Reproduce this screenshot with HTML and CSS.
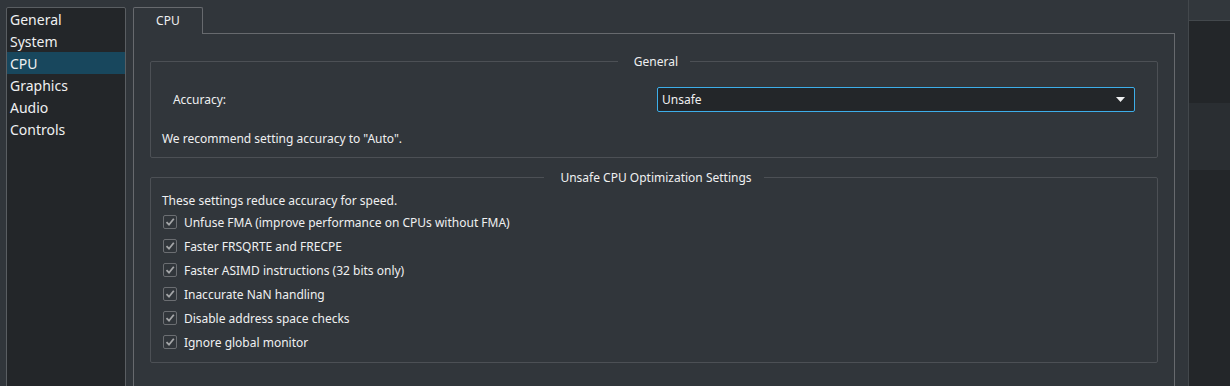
FILE: index.html
```html
<!DOCTYPE html>
<html>
<head>
<meta charset="utf-8">
<link rel="stylesheet" href="styles.css">
</head>
<body>
<div class="app">
  <ul class="sidebar">
    <li>General</li>
    <li>System</li>
    <li class="selected">CPU</li>
    <li>Graphics</li>
    <li>Audio</li>
    <li>Controls</li>
  </ul>
  <div class="main">
    <div class="tabbar">
      <div class="tab">CPU</div>
      <div class="tabfill"></div>
    </div>
    <div class="pane">
      <fieldset class="group">
        <legend>General</legend>
        <div class="acc-row">
          <span class="acc-label">Accuracy:</span>
          <div class="combo">
            <span>Unsafe</span>
            <svg class="arrow" width="9" height="5" viewBox="0 0 9 5"><path d="M0 0H9L4.5 5Z" fill="#eff0f1"/></svg>
          </div>
        </div>
        <p class="note">We recommend setting accuracy to "Auto".</p>
      </fieldset>
      <fieldset class="group unsafe">
        <legend>Unsafe CPU Optimization Settings</legend>
        <p class="intro">These settings reduce accuracy for speed.</p>
        <ul class="checks">
          <li><span class="cb"><svg width="12" height="12" viewBox="0 0 12 12"><path d="M2.5 6.2L5 8.7L9.8 2.8" fill="none" stroke="#a4a6a8" stroke-width="1.8"/></svg></span>Unfuse FMA (improve performance on CPUs without FMA)</li>
          <li><span class="cb"><svg width="12" height="12" viewBox="0 0 12 12"><path d="M2.5 6.2L5 8.7L9.8 2.8" fill="none" stroke="#a4a6a8" stroke-width="1.8"/></svg></span>Faster FRSQRTE and FRECPE</li>
          <li><span class="cb"><svg width="12" height="12" viewBox="0 0 12 12"><path d="M2.5 6.2L5 8.7L9.8 2.8" fill="none" stroke="#a4a6a8" stroke-width="1.8"/></svg></span>Faster ASIMD instructions (32 bits only)</li>
          <li><span class="cb"><svg width="12" height="12" viewBox="0 0 12 12"><path d="M2.5 6.2L5 8.7L9.8 2.8" fill="none" stroke="#a4a6a8" stroke-width="1.8"/></svg></span>Inaccurate NaN handling</li>
          <li><span class="cb"><svg width="12" height="12" viewBox="0 0 12 12"><path d="M2.5 6.2L5 8.7L9.8 2.8" fill="none" stroke="#a4a6a8" stroke-width="1.8"/></svg></span>Disable address space checks</li>
          <li><span class="cb"><svg width="12" height="12" viewBox="0 0 12 12"><path d="M2.5 6.2L5 8.7L9.8 2.8" fill="none" stroke="#a4a6a8" stroke-width="1.8"/></svg></span>Ignore global monitor</li>
        </ul>
      </fieldset>
    </div>
  </div>
  <div class="strip">
    <div class="s1"></div>
    <div class="s2"></div>
    <div class="s3"></div>
    <div class="s4"></div>
  </div>
</div>
</body>
</html>
```

FILE: styles.css
```css
html, body {
  margin: 0;
  padding: 0;
  background: #31363b;
  overflow: hidden;
}
body {
  font-family: "Noto Sans", "DejaVu Sans", sans-serif;
  font-size: 12px;
  color: #eff0f1;
}
.app {
  display: flex;
  height: 420px;
  padding: 7px 0 0 6px;
  box-sizing: border-box;
}
.sidebar {
  list-style: none;
  margin: 0;
  padding: 0;
  width: 118px;
  background: #232629;
  border: 1px solid #5a5e62;
  border-radius: 2px;
  font-size: 14px;
}
.sidebar li {
  height: 22px;
  line-height: 23px;
  padding-left: 3px;
}
.sidebar li.selected {
  background: #18475d;
}
.main {
  margin-left: 7px;
  width: 1043px;
  display: flex;
  flex-direction: column;
}
.tabbar {
  display: flex;
  height: 27px;
}
.tab {
  box-sizing: border-box;
  width: 70px;
  border: 1px solid #676a6e;
  border-bottom: none;
  border-radius: 2px 2px 0 0;
  text-align: center;
  line-height: 26px;
}
.tabfill {
  flex: 1;
  border-bottom: 1px solid #676a6e;
}
.pane {
  flex: 1;
  border: 1px solid #676a6e;
  border-top: none;
  padding: 19px 16px 0 16px;
}
.group {
  margin: 0;
  border: 1px solid #4c5055;
  border-radius: 2px;
  padding: 17px 11px 10px 11px;
}
.group legend {
  margin: 0 auto;
  padding: 0 12px 0 16px;
  line-height: 17px;
}
.acc-row {
  display: flex;
  align-items: center;
  justify-content: space-between;
  padding: 0 11px 0 11px;
}
.combo {
  box-sizing: border-box;
  width: 478px;
  height: 25px;
  border: 1px solid #3daee9;
  border-radius: 2px;
  background: #232629;
  display: flex;
  align-items: center;
  justify-content: space-between;
  padding: 0 9px 0 4px;
}
.note {
  margin: 18px 0 0 0;
  line-height: 17px;
}
.unsafe {
  margin-top: 11px;
  padding-top: 6px;
  padding-bottom: 8px;
}
.intro {
  margin: 0;
  line-height: 18px;
}
.checks {
  list-style: none;
  margin: 0;
  padding: 0;
}
.checks li {
  height: 24px;
  display: flex;
  align-items: center;
}
.cb {
  width: 12px;
  height: 12px;
  border: 1px solid #6b6e72;
  border-radius: 2px;
  background: #31363b;
  margin: 0 7px 0 1px;
  display: flex;
}
.strip {
  margin-left: 13px;
  width: 41px;
  margin-top: -7px;
  border-left: 1px solid #43484c;
  display: flex;
  flex-direction: column;
}
.s1 {
  height: 20px;
  background: #32373c;
  border-bottom: 1px solid #43484c;
}
.s2 {
  height: 82px;
  background: #232629;
}
.s3 {
  height: 67px;
  background: #2a2e32;
}
.s4 {
  flex: 1;
  background: #232629;
}
```
